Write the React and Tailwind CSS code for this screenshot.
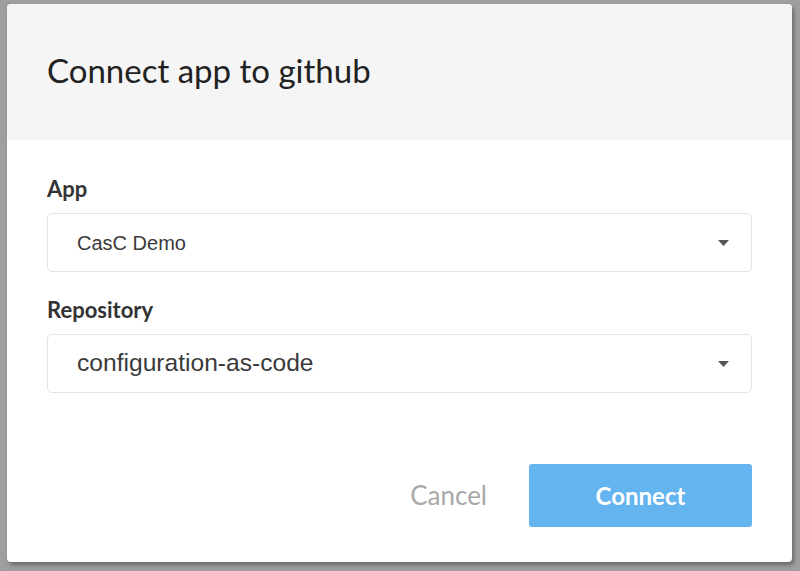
import React from 'react';

function Caret() {
  return (
    <svg width="11" height="6" viewBox="0 0 11 6" className="shrink-0">
      <path d="M0 0 L11 0 L5.5 6 Z" fill="#555555" />
    </svg>
  );
}

function SelectField({ label, value, valueClass }) {
  return (
    <div className="flex flex-col">
      <label className="text-[22px] font-bold text-[#333333] leading-[22px] mb-[13px]">{label}</label>
      <div className="h-[59px] flex items-center justify-between pl-[29px] pr-[22px] border border-[#e4e4e4] rounded-[5px] bg-white">
        <span className={valueClass} style={{ fontFamily: "'Liberation Sans', Arial, sans-serif" }}>{value}</span>
        <Caret />
      </div>
    </div>
  );
}

export default function App() {
  return (
    <div className="w-[800px] h-[571px] bg-[#9f9f9f] pt-[4px] pl-[7px]" style={{ fontFamily: "Lato, 'Open Sans', sans-serif" }}>
      <div className="w-[785px] h-[558px] bg-white rounded-[4px] overflow-hidden flex flex-col shadow-[2px_3px_4px_rgba(0,0,0,0.35)]">
        {/* Header */}
        <div className="h-[136px] bg-[#f5f5f5] flex items-center px-[40px]">
          <h1 className="text-[33px] text-[#222222] leading-none -mt-[4px]">Connect app to github</h1>
        </div>

        {/* Body */}
        <div className="px-[40px] pt-[38px] flex flex-col gap-[27px]">
          <SelectField label="App" value="CasC Demo" valueClass="text-[20px] text-[#3a3a3a]" />
          <SelectField label="Repository" value="configuration-as-code" valueClass="text-[24.6px] text-[#3a3a3a]" />
        </div>

        {/* Footer */}
        <div className="mt-[71px] px-[40px] flex justify-end items-center gap-[42px]">
          <button className="text-[26px] text-[#a8a8a8]">Cancel</button>
          <button className="w-[223px] h-[63px] bg-[#64b4ef] rounded-[3px] text-white text-[24px] font-bold">
            Connect
          </button>
        </div>
      </div>
    </div>
  );
}
